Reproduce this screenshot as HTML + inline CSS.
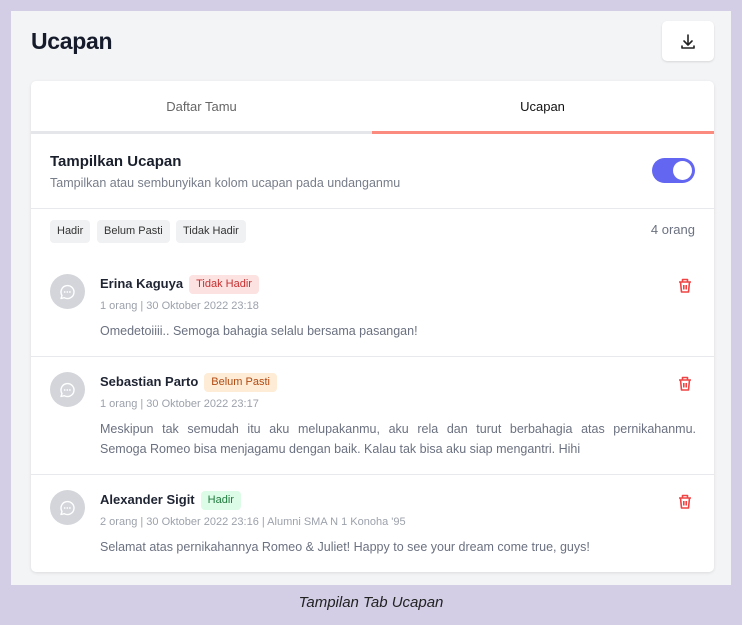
<!DOCTYPE html>
<html><head><meta charset="utf-8"><style>
*{box-sizing:border-box;margin:0;padding:0}
body{width:742px;height:625px;background:#d3cee6;font-family:"Liberation Sans",sans-serif;position:relative;overflow:hidden;color:#1f2433}
.panel{position:absolute;left:11px;top:11px;width:720px;height:574px;background:#f3f4f6}
.abs{position:absolute;white-space:nowrap}
h1{position:absolute;left:20px;top:17px;font-size:23px;font-weight:bold;color:#161b2b;letter-spacing:-0.3px}
.dl{position:absolute;left:651px;top:10px;width:52px;height:40px;background:#fff;border-radius:5px;box-shadow:0 1px 2px rgba(0,0,0,.12)}
.card{position:absolute;left:20px;top:70px;width:683px;height:491px;background:#fff;border-radius:5px;box-shadow:0 1px 3px rgba(0,0,0,.1);overflow:hidden}
.tab{position:absolute;top:0;height:55px;width:341px;text-align:center;line-height:52px;font-size:13px}
.line{position:absolute;top:50px;height:3px}
.hr{position:absolute;left:0;width:683px;height:1px;background:#e8e9ec}
.chip{position:absolute;top:139px;height:23px;background:#f0f1f3;border-radius:4px;font-size:11px;line-height:23px;padding:0 7px;color:#333}
.av{position:absolute;left:19px;width:35px;height:35px;border-radius:50%;background:#d3d5da}
.name{font-size:13px;font-weight:bold;color:#1f2433}
.badge{display:inline-block;font-size:11px;padding:0 7px;height:19px;line-height:19px;border-radius:4px;margin-left:6px;vertical-align:1px}
.meta{font-size:11px;color:#9ca1ab}
.msg{font-size:12.5px;color:#6b7180;line-height:20px}
</style></head><body>
<div class="panel">
<h1>Ucapan</h1>
<div class="dl"><svg width="52" height="40" viewBox="0 0 52 40"><g fill="none" stroke="#222" stroke-width="1.6" stroke-linecap="round" stroke-linejoin="round"><path d="M26 14v10M22 20l4 4 4-4M20 25v2h12v-2"/></g></svg></div>
<div class="card">
<div class="tab" style="left:0;color:#666">Daftar Tamu</div>
<div class="tab" style="left:341px;color:#111">Ucapan</div>
<div class="line" style="left:0;width:341px;background:#e5e6ea"></div>
<div class="line" style="left:341px;width:342px;background:#fb8a7f"></div>
<div class="abs" style="left:19px;top:72px;font-size:15px;font-weight:bold;color:#1a1f2c">Tampilkan Ucapan</div>
<div class="abs" style="left:19px;top:95px;font-size:12.5px;color:#777d89">Tampilkan atau sembunyikan kolom ucapan pada undanganmu</div>
<div class="abs" style="left:621px;top:77px;width:43px;height:25px;border-radius:13px;background:#6366f1"><div style="position:absolute;right:3px;top:3px;width:19px;height:19px;border-radius:50%;background:#fff"></div></div>
<div class="hr" style="top:127px"></div>
<div class="chip" style="left:19px">Hadir</div>
<div class="chip" style="left:66px">Belum Pasti</div>
<div class="chip" style="left:145px">Tidak Hadir</div>
<div class="abs" style="right:19px;top:141px;font-size:13px;color:#6b7180">4 orang</div>

<div class="av" style="top:193px"></div>
<div class="abs" style="left:69px;top:194px"><span class="name">Erina Kaguya</span><span class="badge" style="background:#fde2e2;color:#c53030">Tidak Hadir</span></div>
<div class="abs meta" style="left:69px;top:219px">1 orang | 30 Oktober 2022 23:18</div>
<div class="abs msg" style="left:69px;top:240px">Omedetoiiii.. Semoga bahagia selalu bersama pasangan!</div>
<div class="hr" style="top:275px"></div>

<div class="av" style="top:291px"></div>
<div class="abs" style="left:69px;top:292px"><span class="name">Sebastian Parto</span><span class="badge" style="background:#feecd6;color:#b04a12">Belum Pasti</span></div>
<div class="abs meta" style="left:69px;top:317px">1 orang | 30 Oktober 2022 23:17</div>
<div class="abs msg" style="left:69px;top:338px;width:596px;white-space:normal;text-align:justify;text-align-last:justify">Meskipun tak semudah itu aku melupakanmu, aku rela dan turut berbahagia atas pernikahanmu.</div>
<div class="abs msg" style="left:69px;top:358px">Semoga Romeo bisa menjagamu dengan baik. Kalau tak bisa aku siap mengantri. Hihi</div>
<div class="hr" style="top:393px"></div>

<div class="av" style="top:409px"></div>
<div class="abs" style="left:69px;top:410px"><span class="name">Alexander Sigit</span><span class="badge" style="background:#dcfce7;color:#1f7a3d">Hadir</span></div>
<div class="abs meta" style="left:69px;top:435px">2 orang | 30 Oktober 2022 23:16 | Alumni SMA N 1 Konoha '95</div>
<div class="abs msg" style="left:69px;top:456px">Selamat atas pernikahannya Romeo &amp; Juliet! Happy to see your dream come true, guys!</div>
</div>
</div>
<div class="abs" style="left:0;width:742px;top:594px;text-align:center;font-size:15px;font-style:italic;color:#222">Tampilan Tab Ucapan</div>
<svg style="position:absolute;left:0;top:0" width="742" height="625">
<defs><g id="bub"><path d="M-6 6.5l1-3a6.5 6.5 0 1 1 2.3 2.2z" fill="none" stroke="#fff" stroke-width="1.4" stroke-linejoin="round"/><circle cx="-2.3" cy="0" r=".9" fill="#fff"/><circle cx="0.3" cy="0" r=".9" fill="#fff"/><circle cx="2.9" cy="0" r=".9" fill="#fff"/></g>
<g id="tr" fill="none" stroke="#ef4444" stroke-width="1.6" stroke-linejoin="round"><path d="M-6-4h12M-2.5-4v-2.5h5v2.5M-4.5-4l1 10h7l1-10M-1.2-1v4.5M1.2-1v4.5"/></g></defs>
<use href="#bub" x="67" y="292"/><use href="#bub" x="67" y="390"/><use href="#bub" x="67" y="508"/>
<use href="#tr" x="685" y="286"/><use href="#tr" x="685" y="384"/><use href="#tr" x="685" y="502"/>
</svg>
</body></html>
